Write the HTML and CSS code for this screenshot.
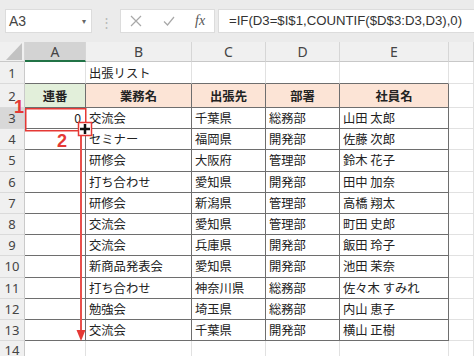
FILE: index.html
```html
<!DOCTYPE html>
<html lang="ja">
<head>
  <meta charset="UTF-8">
  <title>出張リスト</title>
  <link rel="stylesheet" href="styles.css">
</head>
<body>
  <div class="toolbar">
    <div class="namebox"><span>A3</span><span class="caret">▾</span></div>
    <div class="grip">⋮</div>
    <div class="fxbox">
      <svg class="ico" width="12" height="12" viewBox="0 0 12 12"><path d="M1 1L11 11M11 1L1 11" stroke="#a8a8a8" stroke-width="1.2" fill="none"/></svg>
      <svg class="ico ok" width="12" height="12" viewBox="0 0 12 12"><path d="M1 6.5L4.5 10L11 2" stroke="#a8a8a8" stroke-width="1.2" fill="none"/></svg>
      <span class="fx">fx</span>
    </div>
    <div class="formula">=IF(D3=$I$1,COUNTIF($D$3:D3,D3),0)</div>
  </div>

  <div class="sheet">
    <div class="grid">
      <!-- column headers -->
      <div class="ch corner"></div>
      <div class="ch sel">A</div>
      <div class="ch">B</div>
      <div class="ch">C</div>
      <div class="ch">D</div>
      <div class="ch">E</div>
      <div class="ch"></div>

      <!-- row 1 -->
      <div class="rh">1</div>
      <div class="top"></div>
      <div class="top">出張リスト</div>
      <div class="top"></div>
      <div class="top"></div>
      <div class="top"></div>
      <div></div>

      <!-- row 2 -->
      <div class="rh">2</div>
      <div class="t th no">連番</div>
      <div class="t th">業務名</div>
      <div class="t th">出張先</div>
      <div class="t th">部署</div>
      <div class="t th">社員名</div>
      <div></div>

      <div class="rh sel">3</div>
      <div class="t num">0</div>
      <div class="t">交流会</div>
      <div class="t">千葉県</div>
      <div class="t">総務部</div>
      <div class="t">山田 太郎</div>
      <div></div>

      <div class="rh">4</div>
      <div class="t"></div>
      <div class="t">セミナー</div>
      <div class="t">福岡県</div>
      <div class="t">開発部</div>
      <div class="t">佐藤 次郎</div>
      <div></div>

      <div class="rh">5</div>
      <div class="t"></div>
      <div class="t">研修会</div>
      <div class="t">大阪府</div>
      <div class="t">管理部</div>
      <div class="t">鈴木 花子</div>
      <div></div>

      <div class="rh">6</div>
      <div class="t"></div>
      <div class="t">打ち合わせ</div>
      <div class="t">愛知県</div>
      <div class="t">開発部</div>
      <div class="t">田中 加奈</div>
      <div></div>

      <div class="rh">7</div>
      <div class="t"></div>
      <div class="t">研修会</div>
      <div class="t">新潟県</div>
      <div class="t">管理部</div>
      <div class="t">高橋 翔太</div>
      <div></div>

      <div class="rh">8</div>
      <div class="t"></div>
      <div class="t">交流会</div>
      <div class="t">愛知県</div>
      <div class="t">管理部</div>
      <div class="t">町田 史郎</div>
      <div></div>

      <div class="rh">9</div>
      <div class="t"></div>
      <div class="t">交流会</div>
      <div class="t">兵庫県</div>
      <div class="t">開発部</div>
      <div class="t">飯田 玲子</div>
      <div></div>

      <div class="rh">10</div>
      <div class="t"></div>
      <div class="t">新商品発表会</div>
      <div class="t">愛知県</div>
      <div class="t">開発部</div>
      <div class="t">池田 茉奈</div>
      <div></div>

      <div class="rh">11</div>
      <div class="t"></div>
      <div class="t">打ち合わせ</div>
      <div class="t">神奈川県</div>
      <div class="t">総務部</div>
      <div class="t">佐々木 すみれ</div>
      <div></div>

      <div class="rh">12</div>
      <div class="t"></div>
      <div class="t">勉強会</div>
      <div class="t">埼玉県</div>
      <div class="t">総務部</div>
      <div class="t">内山 恵子</div>
      <div></div>

      <div class="rh">13</div>
      <div class="t"></div>
      <div class="t">交流会</div>
      <div class="t">千葉県</div>
      <div class="t">開発部</div>
      <div class="t">横山 正樹</div>
      <div></div>

      <div class="rh">14</div>
      <div></div>
      <div></div>
      <div></div>
      <div></div>
      <div></div>
      <div></div>
    </div>

    <!-- red annotations on top of the sheet -->
    <svg class="marks" width="474" height="314" viewBox="0 0 474 314">
      <rect x="25.75" y="66.75" width="60" height="22" fill="none" stroke="#e53935" stroke-width="1.5"/>
      <line x1="81" y1="93" x2="81" y2="290" stroke="#e8504c" stroke-width="2"/>
      <polygon points="76.5,288 85.5,288 81,299" fill="#e53935"/>
      <rect x="78.5" y="80.5" width="13" height="13" fill="#fff" stroke="#e53935" stroke-width="1.5"/>
      <path d="M80 87H90M85 82V92" stroke="#fff" stroke-width="4.5"/>
      <path d="M80 87H90M85 82V92" stroke="#111" stroke-width="2.5"/>
    </svg>
    <span class="step one">1</span>
    <span class="step two">2</span>
  </div>
</body>
</html>
```

FILE: styles.css
```css
* { box-sizing: border-box; }
body {
  margin: 0;
  width: 474px;
  height: 356px;
  overflow: hidden;
  background: #fff;
  font-family: "Noto Sans CJK JP", "Noto Sans", sans-serif;
}

/* name box + formula bar */
.toolbar {
  height: 42px;
  background: #ebebeb;
  display: flex;
  align-items: flex-start;
  padding: 9px 0 0 5px;
}
.namebox {
  width: 87px;
  height: 24px;
  background: #fff;
  border: 1px solid #dcdcdc;
  display: flex;
  align-items: center;
  justify-content: space-between;
  padding: 0 5px 0 3px;
  font: 14px "Liberation Sans", sans-serif;
  color: #444;
}
.caret { font-size: 8px; color: #666; }
.grip {
  width: 28px;
  height: 24px;
  display: flex;
  align-items: center;
  justify-content: center;
  color: #b8b8b8;
  font-size: 13px;
}
.fxbox {
  width: 95px;
  height: 24px;
  background: #fff;
  border: 1px solid #dcdcdc;
  display: flex;
  align-items: center;
  padding-left: 9px;
}
.ico.ok { margin-left: 21px; }
.fx {
  margin-left: 20px;
  font: italic 14px "Liberation Serif", serif;
  color: #555;
}
.formula {
  flex: 1;
  height: 24px;
  margin-left: 3px;
  background: #fff;
  border: 1px solid #dcdcdc;
  border-right: none;
  padding-left: 10px;
  font: 13.2px/22px "Liberation Sans", sans-serif;
  color: #333;
  white-space: nowrap;
}

/* worksheet */
.sheet { position: relative; }
.grid {
  display: grid;
  grid-template-columns: 25px 61px 106px 74px 74px 109px 1fr;
  grid-template-rows: 20px 22px 24px repeat(11, 21.2px) 1fr;
  height: 314px;
}
.grid > div {
  border-right: 1px solid #e1e1e1;
  border-bottom: 1px solid #e1e1e1;
  display: flex;
  align-items: center;
  padding: 0 3px;
  font-size: 12.3px;
  color: #222;
  white-space: nowrap;
}
.grid .ch {
  background: #f0f0f0;
  justify-content: center;
  font: 14px "Noto Sans", sans-serif;
  color: #444;
  border-right-color: #d6d6d6;
  border-bottom-color: #c8c8c8;
}
.grid .ch.sel {
  background: #d3d3d3;
  border-bottom: 2px solid #217346;
}
.grid .corner { position: relative; }
.corner::after {
  content: "";
  position: absolute;
  right: 2px;
  bottom: 1px;
  width: 16px;
  height: 17px;
  background: #c2c2c2;
  clip-path: polygon(100% 0, 100% 100%, 0 100%);
}
.grid .rh {
  background: #f0f0f0;
  justify-content: center;
  padding: 0;
  font: 13px "Noto Sans", sans-serif;
  color: #444;
  border-right-color: #cacaca;
  border-bottom-color: #dadada;
}
.grid .rh.sel { background: #d8d8d8; }
.grid .top { border-bottom-color: #6e6e6e; }
.grid .t {
  border-right-color: #6e6e6e;
  border-bottom-color: #6e6e6e;
}
.grid .th {
  justify-content: center;
  font-weight: bold;
  background: #fce4d6;
}
.grid .th.no { background: #e2efda; }
.grid .num { justify-content: flex-end; padding-right: 4px; }

.marks {
  position: absolute;
  left: 0;
  top: 0;
  pointer-events: none;
}
.step {
  position: absolute;
  font: bold 18px/1 "Liberation Sans", sans-serif;
  color: #e53935;
}
.step.one { left: 14px; top: 56px; }
.step.two { left: 57px; top: 90px; }
```
